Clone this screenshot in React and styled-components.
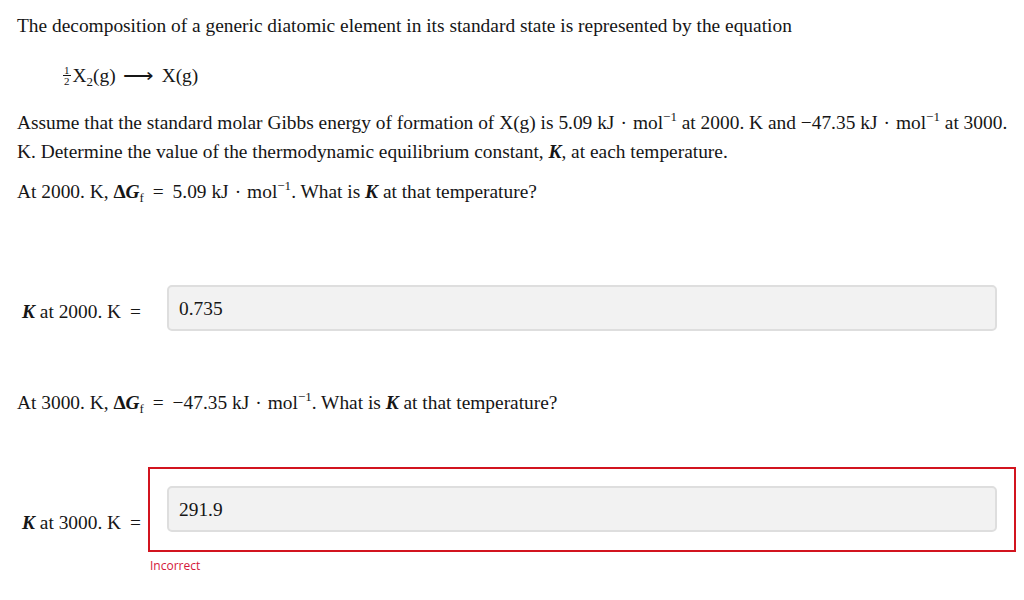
import React from "react";
import styled, { createGlobalStyle } from "styled-components";

const GlobalStyle = createGlobalStyle`
    html, body {
        margin: 0;
        padding: 0;
        background: #ffffff;
    }
`;

const Page = styled.div`
    width: 1024px;
    padding: 11px 0 0 17px;
    box-sizing: border-box;
    font-family: "Liberation Serif", "Times New Roman", serif;
    font-size: 19.4px;
    line-height: 29px;
    color: #161616;
`;

const Para = styled.p`
    margin: ${props => props.gap || 0}px 0 0 0;
`;

const Equation = styled.div`
    margin: 21px 0 0 46px;
    height: 29px;
    white-space: nowrap;
`;

const Frac = styled.span`
    display: inline-flex;
    flex-direction: column;
    align-items: center;
    vertical-align: 8px;
    font-size: 11px;
    line-height: 10px;
    margin-right: 2px;
    & > span:first-child {
        border-bottom: 1px solid #161616;
        padding: 0 1px;
    }
`;

const Arrow = styled.span`
    display: inline-block;
    margin: 0 12px 0 10px;
    font-size: 17px;
    transform: scaleX(1.25);
`;

const Sub = styled.sub`
    font-size: 13px;
    line-height: 0;
    vertical-align: -4px;
`;

const Sup = styled.sup`
    font-size: 13px;
    line-height: 0;
    vertical-align: 8px;
`;

const KVar = styled.i`
    font-weight: bold;
`;

const Dot = styled.span`
    margin: 0 6px;
`;

const Eq = styled.span`
    margin: 0 4px;
`;

const AnswerRow = styled.div`
    display: flex;
    align-items: flex-start;
    margin-top: ${props => props.gap}px;
    margin-left: -17px;
`;

const Label = styled.div`
    width: 148px;
    box-sizing: border-box;
    padding-left: 22px;
    padding-top: ${props => props.offset || 0}px;
    white-space: nowrap;
`;

const AnswerCol = styled.div`
    display: flex;
    flex-direction: column;
    width: 868px;
`;

const AnswerWrap = styled.div`
    box-sizing: border-box;
    padding: 17px 17px 18px 17px;
    border: 2px solid ${props => (props.$wrong ? "#d2141f" : "transparent")};
`;

const AnswerBox = styled.div`
    height: 46px;
    box-sizing: border-box;
    border: 2px solid #dedede;
    border-radius: 5px;
    background: #f2f2f2;
    padding: 7px 0 0 10px;
    line-height: 29px;
`;

const Feedback = styled.div`
    margin: 7px 0 0 2px;
    font-family: "Open Sans", "Liberation Sans", sans-serif;
    font-size: 12px;
    line-height: 14px;
    color: #d4173a;
`;

const DeltaG = () => (
    <>
        <b>Δ</b><KVar>G</KVar><Sub>f</Sub>
    </>
);

const Unit = () => (
    <>
        kJ<Dot>·</Dot>mol<Sup>−1</Sup>
    </>
);

export default function App() {
    return (
        <>
            <GlobalStyle />
            <Page>
                <Para>
                    The decomposition of a generic diatomic element in its standard state is represented by the equation
                </Para>
                <Equation>
                    <Frac><span>1</span><span>2</span></Frac>X<Sub>2</Sub>(g)<Arrow>⟶</Arrow>X(g)
                </Equation>
                <Para gap={18}>
                    Assume that the standard molar Gibbs energy of formation of X(g) is 5.09 <Unit /> at 2000. K and −47.35 <Unit /> at 3000. K. Determine the value of the thermodynamic equilibrium constant, <KVar>K</KVar>, at each temperature.
                </Para>
                <Para gap={11}>
                    At 2000. K, <DeltaG /> <Eq>=</Eq> 5.09 <Unit />. What is <KVar>K</KVar> at that temperature?
                </Para>
                <AnswerRow gap={60}>
                    <Label offset={31}><KVar>K</KVar> at 2000. K <Eq>=</Eq></Label>
                    <AnswerCol>
                        <AnswerWrap>
                            <AnswerBox>0.735</AnswerBox>
                        </AnswerWrap>
                    </AnswerCol>
                </AnswerRow>
                <Para gap={37}>
                    At 3000. K, <DeltaG /> <Eq>=</Eq> −47.35 <Unit />. What is <KVar>K</KVar> at that temperature?
                </Para>
                <AnswerRow gap={50}>
                    <Label offset={41}><KVar>K</KVar> at 3000. K <Eq>=</Eq></Label>
                    <AnswerCol>
                        <AnswerWrap $wrong>
                            <AnswerBox>291.9</AnswerBox>
                        </AnswerWrap>
                        <Feedback>Incorrect</Feedback>
                    </AnswerCol>
                </AnswerRow>
            </Page>
        </>
    );
}
